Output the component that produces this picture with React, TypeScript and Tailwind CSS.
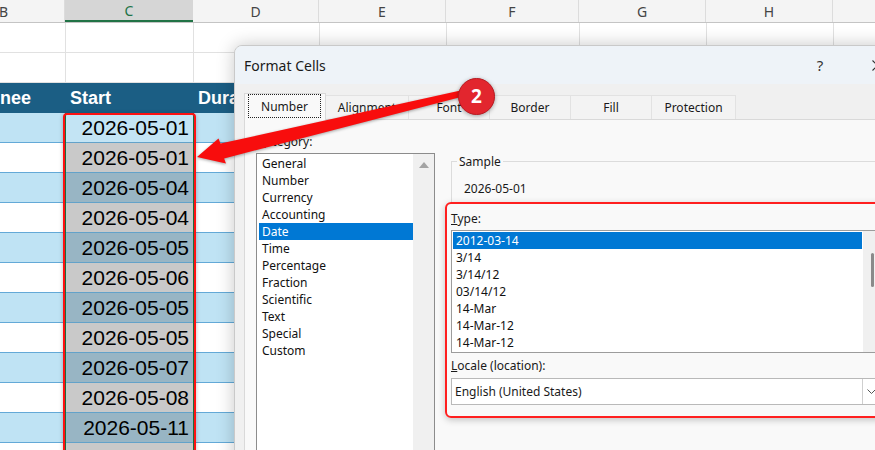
import React from "react";

const dates = [
  "2026-05-01",
  "2026-05-01",
  "2026-05-04",
  "2026-05-04",
  "2026-05-05",
  "2026-05-06",
  "2026-05-05",
  "2026-05-05",
  "2026-05-07",
  "2026-05-08",
  "2026-05-11",
  "",
];

const categories = [
  "General",
  "Number",
  "Currency",
  "Accounting",
  "Date",
  "Time",
  "Percentage",
  "Fraction",
  "Scientific",
  "Text",
  "Special",
  "Custom",
];

const types = ["2012-03-14", "3/14", "3/14/12", "03/14/12", "14-Mar", "14-Mar-12", "14-Mar-12"];

function ColHeaders() {
  return (
    <div className="flex h-[23px] bg-[#f4f4f4] border-b border-[#c4c4c4] text-[14px] text-[#444] font-['Noto_Sans',sans-serif]">
      <div className="w-[66px] shrink-0 border-r border-[#dcdcdc] flex items-center -ml-[1px]">B</div>
      <div className="w-[128px] shrink-0 bg-[#d6d6d6] border-b-2 border-[#217346] text-[#217346] flex items-center justify-center">C</div>
      <div className="w-[126px] shrink-0 border-r border-[#dcdcdc] flex items-center justify-center">D</div>
      <div className="w-[127px] shrink-0 border-r border-[#dcdcdc] flex items-center justify-center">E</div>
      <div className="w-[133px] shrink-0 border-r border-[#dcdcdc] flex items-center justify-center">F</div>
      <div className="w-[127px] shrink-0 border-r border-[#dcdcdc] flex items-center justify-center">G</div>
      <div className="w-[127px] shrink-0 border-r border-[#dcdcdc] flex items-center justify-center">H</div>
      <div className="flex-1" />
    </div>
  );
}

function EmptyRow() {
  return (
    <div className="flex h-[30px]">
      <div className="w-[66px] shrink-0 border-r border-b border-[#e1e1e1]" />
      <div className="w-[128px] shrink-0 border-r border-b border-[#e1e1e1]" />
      <div className="w-[126px] shrink-0 border-r border-b border-[#e1e1e1]" />
      <div className="w-[127px] shrink-0 border-r border-b border-[#e1e1e1]" />
      <div className="w-[133px] shrink-0 border-r border-b border-[#e1e1e1]" />
      <div className="w-[127px] shrink-0 border-r border-b border-[#e1e1e1]" />
      <div className="w-[127px] shrink-0 border-r border-b border-[#e1e1e1]" />
      <div className="flex-1 border-b border-[#e1e1e1]" />
    </div>
  );
}

function DataRow({ i, date }: { i: number; date: string }) {
  const blue = i % 2 === 0;
  const side = blue ? "bg-[#bfe3f4]" : "bg-white";
  const mid = i === 0 ? "bg-[#c3e4f4]" : blue ? "bg-[#98b5c4]" : "bg-[#c9c9c9]";
  return (
    <div className="flex h-[30px]">
      <div className={`w-[66px] shrink-0 border-b border-[#63a9d7] ${side}`} />
      <div
        className={`w-[128px] shrink-0 border-b border-[#63a2c9] ${mid} flex items-center justify-end pr-[5px] text-[21px] text-black font-['Liberation_Sans',Arial,sans-serif]`}
      >
        {date}
      </div>
      <div className={`flex-1 border-b border-[#63a9d7] ${side}`} />
    </div>
  );
}

function Tab({ label, w }: { label: string; w: string }) {
  return (
    <div className={`${w} h-[24px] shrink-0 bg-[#f3f3f3] border-t border-r border-[#e2e2e2] flex items-center justify-center`}>
      {label}
    </div>
  );
}

function Dialog() {
  return (
    <div className="absolute left-[234px] top-[45px] w-[680px] h-[430px] rounded-tl-[8px] bg-[#f0f0f0] border border-[#c9c9c9] shadow-[0_0_18px_rgba(0,0,0,0.22)] overflow-hidden flex flex-col font-['Noto_Sans',sans-serif] text-[#1a1a1a]">
      {/* Title bar */}
      <div className="h-[38px] shrink-0 bg-[#eef3f8] flex items-center pl-[9px]">
        <div className="text-[14px]">Format Cells</div>
        <div className="ml-auto w-[46px] text-center text-[15px] text-[#333]">?</div>
        <div className="ml-[11px] w-[46px] flex justify-center">
          <svg width="11" height="11" viewBox="0 0 11 11">
            <path d="M0.5 0.5 L10.5 10.5 M10.5 0.5 L0.5 10.5" stroke="#333" strokeWidth="1.1" />
          </svg>
        </div>
        <div className="w-[13px]" />
      </div>
      {/* Body */}
      <div className="flex-1 pl-[9px] pt-[9px] text-[12px] leading-[17px]">
        {/* Tabs */}
        <div className="flex items-end h-[26px]">
          <div className="w-[82px] h-[27px] shrink-0 bg-[#f9f9f9] border-t border-l border-r border-[#d9d9d9] relative z-10 -mb-px pl-[3px] pr-[4px] pb-[2px]">
            <div className="h-full border border-dotted border-[#222] flex items-center justify-center">Number</div>
          </div>
          <Tab label="Alignment" w="w-[83px]" />
          <Tab label="Font" w="w-[81px]" />
          <Tab label="Border" w="w-[81px]" />
          <Tab label="Fill" w="w-[81px]" />
          <Tab label="Protection" w="w-[84px]" />
        </div>
        {/* Panel */}
        <div className="w-[660px] h-[400px] bg-[#f9f9f9] border border-[#d9d9d9] pl-[11px] pt-[13px] flex gap-[16px]">
          {/* Category */}
          <div className="w-[179px] shrink-0 flex flex-col">
            <div className="pl-[2px] h-[17px]">
              <span className="underline">C</span>ategory:
            </div>
            <div className="mt-[3px] h-[320px] border border-[#8c8c8c] bg-white flex">
              <div className="flex-1 pl-[2px] pt-[1px] flex flex-col">
                {categories.map((c) => (
                  <div
                    key={c}
                    className={`h-[17px] pl-[3px] ${c === "Date" ? "bg-[#0078d4] text-white" : "text-[#111]"}`}
                  >
                    {c}
                  </div>
                ))}
              </div>
              <div className="w-[21px] bg-[#f0f0f0] flex justify-center pt-[8px]">
                <svg width="10" height="6" viewBox="0 0 10 6">
                  <path d="M5 0 L10 6 L0 6 Z" fill="#a3a3a3" />
                </svg>
              </div>
            </div>
          </div>
          {/* Right column */}
          <div className="w-[430px] shrink-0 flex flex-col mt-[28px]">
            <div className="h-[41px] border-t border-l border-[#dcdcdc] pl-[12px]">
              <div className="w-fit -mt-[9px] -ml-[7px] px-[2px] bg-[#f9f9f9]">Sample</div>
              <div className="mt-[10px]">2026-05-01</div>
            </div>
            <div className="-ml-[6px] -mr-[6px] border-2 border-[#ff1f1f] rounded-[6px] pl-[4px] pr-[4px] pt-[6px] pb-[11px] shadow-[0_2px_7px_rgba(0,0,0,0.22)]">
              <div className="h-[17px]">
                <span className="underline">T</span>ype:
              </div>
              <div className="mt-[3px] h-[123px] border border-[#9c9c9c] bg-white flex">
                <div className="flex-1 p-[1px] flex flex-col">
                  {types.map((t, idx) => (
                    <div
                      key={idx}
                      className={`h-[17px] pl-[3px] ${idx === 0 ? "bg-[#0078d4] text-white" : "text-[#111]"}`}
                    >
                      {t}
                    </div>
                  ))}
                </div>
                <div className="w-[17px] bg-[#f0f0f0] pt-[22px] pl-[8px]">
                  <div className="w-[3px] h-[34px] rounded-full bg-[#8a8a8a]" />
                </div>
              </div>
              <div className="mt-[4px] h-[17px]">
                <span className="underline">L</span>ocale (location):
              </div>
              <div className="mt-[4px] h-[27px] border border-[#b9b9b9] bg-white flex">
                <div className="flex-1 pl-[3px] flex items-center">English (United States)</div>
                <div className="w-[18px] border-l border-[#cfcfcf] flex items-center justify-center">
                  <svg width="9" height="5" viewBox="0 0 9 5">
                    <path d="M0.5 0.5 L4.5 4.5 L8.5 0.5" stroke="#555" strokeWidth="1" fill="none" />
                  </svg>
                </div>
              </div>
            </div>
          </div>
        </div>
      </div>
    </div>
  );
}

export default function App() {
  return (
    <div className="relative w-[875px] h-[450px] overflow-hidden bg-white">
      {/* Spreadsheet */}
      <div className="flex flex-col">
        <ColHeaders />
        <EmptyRow />
        <EmptyRow />
        <div className="flex h-[30px] bg-[#1b5e84] text-white font-bold text-[18px] font-['Liberation_Sans',Arial,sans-serif]">
          <div className="w-[66px] shrink-0 flex items-center">nee</div>
          <div className="w-[128px] shrink-0 flex items-center pl-[4px]">Start</div>
          <div className="flex-1 flex items-center pl-[4px]">Duration</div>
        </div>
        {dates.map((d, i) => (
          <DataRow key={i} i={i} date={d} />
        ))}
      </div>

      {/* Selection border and red highlight */}
      <div className="absolute left-[65px] top-[113px] w-[129px] h-[345px] border border-[#1e6b3f]" />
      <div className="absolute left-[63px] top-[113px] w-[133px] h-[345px] border-2 border-[#ff1111] rounded-[4px] shadow-[0_1px_4px_rgba(0,0,0,0.25)]" />

      <Dialog />

      {/* Arrow */}
      <svg
        className="absolute left-0 top-0 drop-shadow-[0_1px_1.5px_rgba(0,0,0,0.35)]"
        width="875"
        height="450"
        viewBox="0 0 875 450"
      >
        <polygon
          points="467.3,89.1 220.5,143.6 218.5,138.6 197,157 226,163.6 224.1,158.4 468.7,95.1"
          fill="#f80d0d"
        />
      </svg>

      {/* Badge */}
      <div className="absolute left-[458px] top-[78px] w-[37px] h-[37px] rounded-full bg-[#e2262e] border border-[#b81a21] shadow-[0_1px_4px_rgba(0,0,0,0.35)] flex items-center justify-center text-white font-bold text-[19px] font-['Noto_Sans',sans-serif]">
        2
      </div>
    </div>
  );
}
